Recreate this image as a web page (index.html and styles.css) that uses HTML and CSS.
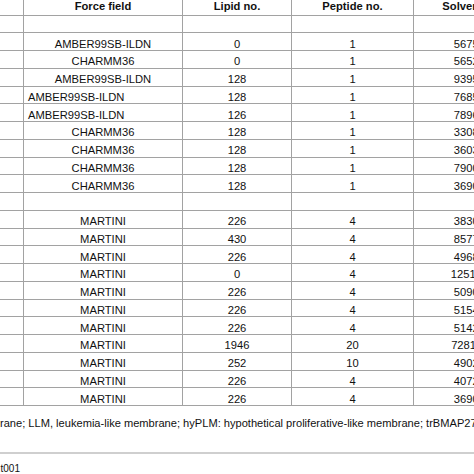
FILE: index.html
```html
<!DOCTYPE html>
<html lang="en">
<head>
<meta charset="utf-8">
<title>Simulated systems</title>
<link rel="stylesheet" href="styles.css">
</head>
<body>
<div class="page">
  <table class="systems">
    <colgroup>
      <col class="c-sys"><col class="c-ff"><col class="c-lip"><col class="c-pep"><col class="c-sol">
    </colgroup>
    <thead>
      <tr><th></th><th>Force field</th><th>Lipid no.</th><th>Peptide no.</th><th>Solvent no.</th></tr>
    </thead>
    <tbody>
      <tr class="group"><td></td><td></td><td></td><td></td><td></td></tr>
      <tr><td></td><td>AMBER99SB-ILDN</td><td>0</td><td>1</td><td>567512</td></tr>
      <tr><td></td><td>CHARMM36</td><td>0</td><td>1</td><td>565284</td></tr>
      <tr><td></td><td>AMBER99SB-ILDN</td><td>128</td><td>1</td><td>939541</td></tr>
      <tr><td></td><td class="left">AMBER99SB-ILDN</td><td>128</td><td>1</td><td>768560</td></tr>
      <tr><td></td><td class="left">AMBER99SB-ILDN</td><td>126</td><td>1</td><td>789613</td></tr>
      <tr><td></td><td>CHARMM36</td><td>128</td><td>1</td><td>330805</td></tr>
      <tr><td></td><td>CHARMM36</td><td>128</td><td>1</td><td>360312</td></tr>
      <tr><td></td><td>CHARMM36</td><td>128</td><td>1</td><td>790044</td></tr>
      <tr><td></td><td>CHARMM36</td><td>128</td><td>1</td><td>369088</td></tr>
      <tr class="group"><td></td><td></td><td></td><td></td><td></td></tr>
      <tr><td></td><td>MARTINI</td><td>226</td><td>4</td><td>383016</td></tr>
      <tr><td></td><td>MARTINI</td><td>430</td><td>4</td><td>857712</td></tr>
      <tr><td></td><td>MARTINI</td><td>226</td><td>4</td><td>496804</td></tr>
      <tr><td></td><td>MARTINI</td><td>0</td><td>4</td><td>1251032</td></tr>
      <tr><td></td><td>MARTINI</td><td>226</td><td>4</td><td>509016</td></tr>
      <tr><td></td><td>MARTINI</td><td>226</td><td>4</td><td>515448</td></tr>
      <tr><td></td><td>MARTINI</td><td>226</td><td>4</td><td>514260</td></tr>
      <tr><td></td><td>MARTINI</td><td>1946</td><td>20</td><td>7281104</td></tr>
      <tr><td></td><td>MARTINI</td><td>252</td><td>10</td><td>490212</td></tr>
      <tr><td></td><td>MARTINI</td><td>226</td><td>4</td><td>407236</td></tr>
      <tr><td></td><td>MARTINI</td><td>226</td><td>4</td><td>369016</td></tr>
    </tbody>
  </table>
  <p class="note"><span class="note-pre">PLM, proliferative-like memb</span><span>rane; LLM, leukemia-like membrane; hyPLM: hypothetical proliferative-like membrane; trBMAP27, truncated BMAP-27.</span></p>
  <hr class="rule">
  <p class="doi"><span class="doi-box"><span>https://doi.org/10.1371/journal.pone.0000000.t001</span></span></p>
</div>
</body>
</html>
```
FILE: styles.css
```css
html, body {
  margin: 0;
  padding: 0;
  overflow: hidden;
  background: #fff;
}

.page {
  width: 474px;
  height: 474px;
  overflow: hidden;
  font-family: "Liberation Sans", Arial, sans-serif;
  color: #111;
}

.systems {
  border-collapse: collapse;
  table-layout: fixed;
  width: 589px;
  margin: -5px 0 0 -58px;
  font-size: 11.2px;
}

.c-sys { width: 81px; }
.c-ff { width: 159px; }
.c-lip { width: 109px; }
.c-pep { width: 122px; }
.c-sol { width: 118px; }

.systems th,
.systems td {
  border: 1px solid #a2a2a2;
  text-align: center;
  white-space: nowrap;
  overflow: hidden;
  padding: 4px 4px 0;
  line-height: 12px;
  box-sizing: border-box;
}

.systems th {
  height: 20px;
  padding-top: 3px;
  font-weight: bold;
  border-top: none;
}

.systems td {
  height: 17.75px;
}

.systems td.left {
  text-align: left;
}

.note {
  margin: 11px 0 0;
  font-size: 11.1px;
  line-height: 13px;
  white-space: nowrap;
  display: flex;
}

.note-pre {
  width: 0;
  display: flex;
  justify-content: flex-end;
}

.rule {
  margin: 22px 0 0;
  border: none;
  height: 2px;
  background: #cfcfcf;
}

.doi {
  margin: 9px 0 0;
  font-size: 10px;
  line-height: 12px;
  white-space: nowrap;
}

.doi-box {
  width: 20px;
  display: flex;
  justify-content: flex-end;
}
```
